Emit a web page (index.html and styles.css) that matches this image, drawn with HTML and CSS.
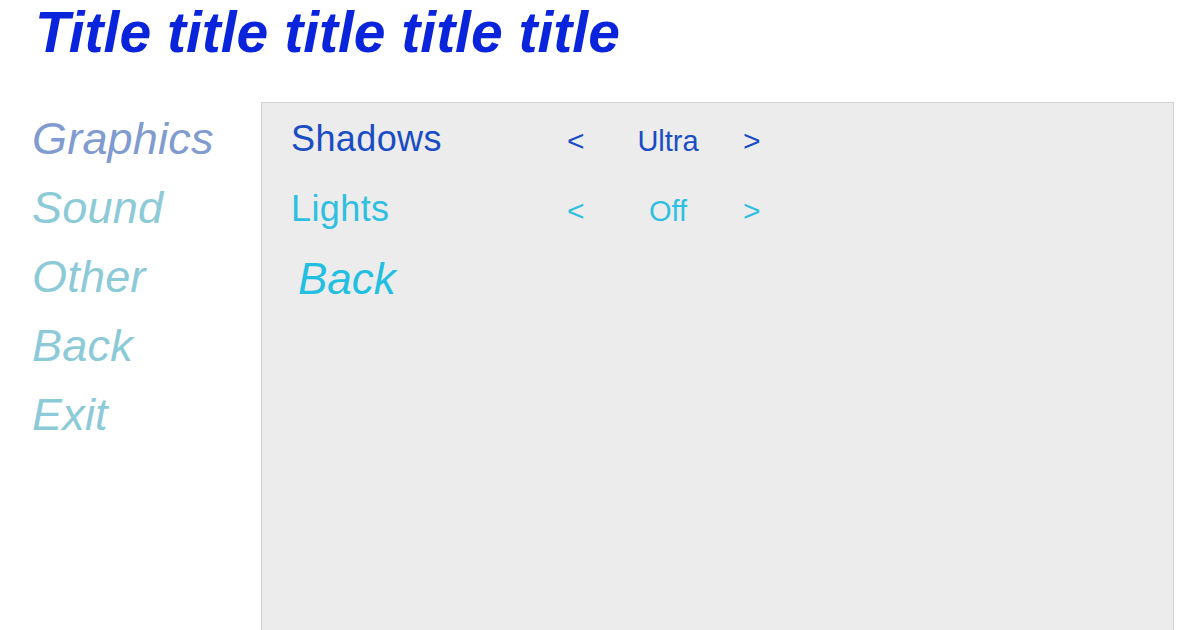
FILE: index.html
```html
<!DOCTYPE html>
<html lang="en">
<head>
	<meta charset="UTF-8">
	<title>Options</title>
	<link rel="stylesheet" href="styles.css">
</head>
<body>
	<h1 class="title">Title title title title title</h1>
	<div class="main">
		<ul class="menu">
			<li class="menu-item current">Graphics</li>
			<li class="menu-item">Sound</li>
			<li class="menu-item">Other</li>
			<li class="menu-item">Back</li>
			<li class="menu-item">Exit</li>
		</ul>
		<div class="panel">
			<div class="option current">
				<span class="option-name">Shadows</span>
				<span class="arrow prev">&lt;</span>
				<span class="option-value">Ultra</span>
				<span class="arrow next">&gt;</span>
			</div>
			<div class="option">
				<span class="option-name">Lights</span>
				<span class="arrow prev">&lt;</span>
				<span class="option-value">Off</span>
				<span class="arrow next">&gt;</span>
			</div>
			<div class="panel-back">Back</div>
		</div>
	</div>
</body>
</html>
```

FILE: styles.css
```css
*{
	box-sizing: border-box;
	margin: 0;
	padding: 0;
}
body{
	font-family: 'Liberation Sans', Arial, sans-serif;
	background: #fff;
	width: 1200px;
	height: 630px;
	overflow: hidden;
}
.title{
	font-size: 57px;
	font-weight: bold;
	font-style: italic;
	line-height: 1.15;
	color: #0a24dc;
	padding-left: 35px;
	height: 102px;
}
.main{
	display: flex;
	height: 528px;
}
ul{
	list-style: none;
}
.menu{
	width: 261px;
	padding: 2px 0 0 32px;
}
.menu-item{
	font-size: 45px;
	font-style: italic;
	line-height: 69px;
	color: #8ccad8;
	letter-spacing: 0.2px;
}
.menu-item.current{
	color: #7f9bd0;
}
.panel{
	width: 913px;
	height: 540px;
	background: #ececec;
	border: 1px solid #d2d2d2;
	padding: 1px 0 0 29px;
}
.option{
	display: flex;
	align-items: baseline;
	height: 70px;
	line-height: 70px;
	color: #2fbfe0;
}
.option.current{
	color: #1a4cc4;
}
.option-name{
	width: 276px;
	font-size: 36px;
	letter-spacing: 0.4px;
}
.arrow{
	font-size: 30px;
}
.prev{
	width: 26px;
}
.option-value{
	width: 150px;
	text-align: center;
	font-size: 29px;
}
.panel-back{
	font-size: 44px;
	font-style: italic;
	line-height: 70px;
	color: #22bfe0;
	padding-left: 7px;
}
```
